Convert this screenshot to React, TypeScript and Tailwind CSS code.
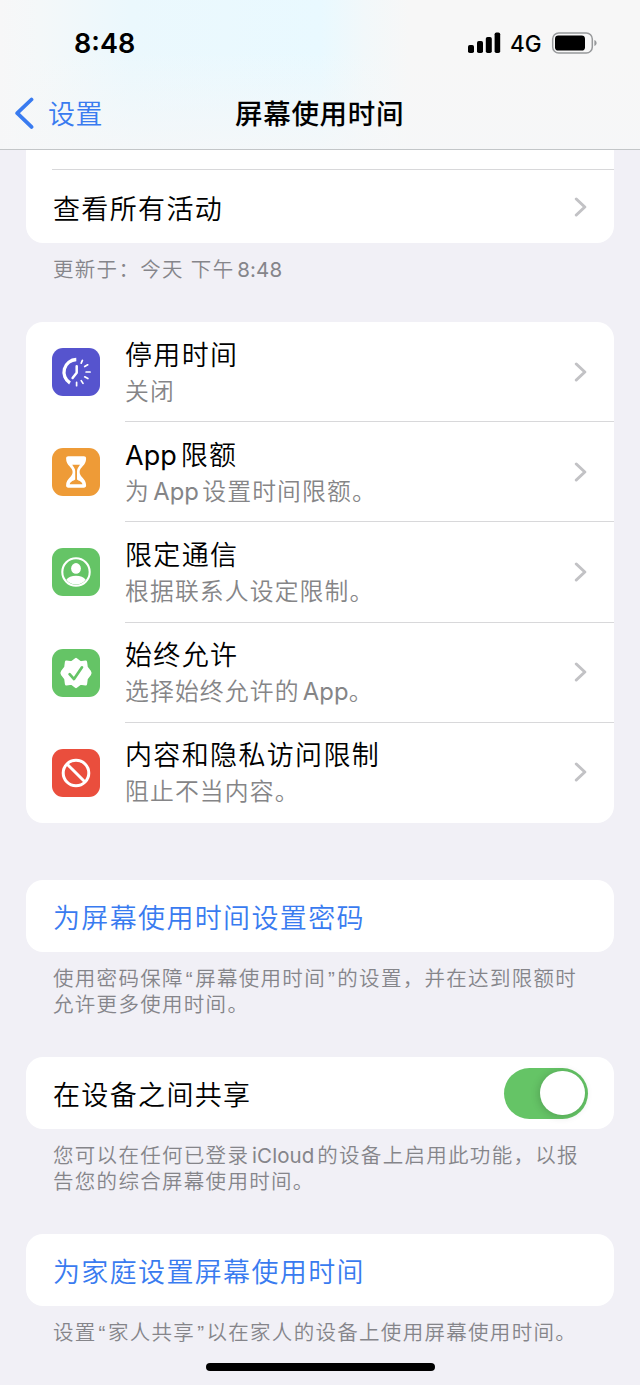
import React from 'react';

function Chevron() {
  return (
    <svg className="h-[20px] w-[13px] shrink-0" viewBox="0 0 13 20" fill="none" stroke="#c2c2c5" strokeWidth="3" strokeLinecap="round" strokeLinejoin="round">
      <path d="M2.3 2 10.8 10 2.3 18" />
    </svg>
  );
}

function DowntimeIcon() {
  return (
    <svg className="size-[48px]" viewBox="0 0 48 48" fill="none" stroke="#fff" strokeLinecap="round" strokeLinejoin="round">
      <path d="M24.3 11.5A12.7 12.7 0 0 0 18 35" strokeWidth="3.3" strokeLinecap="butt" />
      <path d="M24.7 18.2v6.6L20.6 30" strokeWidth="2.5" />
      <g strokeWidth="1.7">
        <path d="M29.2 15.2l1.2-2.8M32.7 18.6l3-1.8M34.1 24h4M32.7 28.8l3.2 1.8M29.2 32.6l1.8 2.8M24.6 34.3v3.4" />
      </g>
    </svg>
  );
}

function HourglassIcon() {
  return (
    <svg className="size-[48px]" viewBox="0 0 48 48" fill="#fff">
      <path d="M16.3 8.3h15.6c1.4 0 2.2.9 2.2 2.1 0 7.4-6.5 8.3-6.5 13.6s6.5 6.2 6.5 13.6c0 1.3-.8 2.2-2.2 2.2H16.3c-1.4 0-2.2-.9-2.2-2.2 0-7.4 6.5-8.3 6.5-13.6s-6.5-6.2-6.5-13.6c0-1.2.8-2.1 2.2-2.1Z" />
      <path d="M20.2 16.8h7.8c-1.6 2.3-3 4-3 6.4v8.2c1.6 1.2 5 2.2 5.5 4.8H17.7c.5-2.6 3.9-3.6 5.5-4.8v-8.2c0-2.4-1.4-4.1-3-6.4Z" fill="#ee9b37" />
    </svg>
  );
}

function PersonIcon() {
  return (
    <svg className="size-[48px]" viewBox="0 0 48 48" fill="#fff">
      <circle cx="24" cy="24" r="13.7" fill="none" stroke="#fff" strokeWidth="2.1" />
      <ellipse cx="24" cy="20.4" rx="4.9" ry="5.3" />
      <path d="M14.3 31.8c1.9-2.6 5.4-4.1 9.7-4.1s7.8 1.5 9.7 4.1A12.3 12.3 0 0 1 24 36.6a12.3 12.3 0 0 1-9.7-4.8Z" />
    </svg>
  );
}

function SealIcon() {
  return (
    <svg className="size-[48px]" viewBox="0 0 48 48" strokeLinejoin="round" strokeLinecap="round">
      <path d="M24 10.4l4.3 3.3 5.3-.7.7 5.3 3.3 4.3q1 1.4 0 2.8l-3.3 4.3-.7 5.3-5.3-.7-4.3 3.3-4.3-3.3-5.3.7-.7-5.3-3.3-4.3q-1-1.4 0-2.8l3.3-4.3.7-5.3 5.3.7Z" fill="#fff" stroke="#fff" strokeWidth="3" />
      <path d="M17.6 25.2l4.4 4.9 8-11.8" fill="none" stroke="#65c466" strokeWidth="2.7" />
    </svg>
  );
}

function NoEntryIcon() {
  return (
    <svg className="size-[48px]" viewBox="0 0 48 48" fill="none" stroke="#fff" strokeWidth="3">
      <circle cx="24" cy="24" r="12.8" />
      <path d="M15.2 15.2 32.8 32.8" />
    </svg>
  );
}

interface Item {
  title: string;
  detail: string;
  tile: string;
  icon: React.ReactNode;
}

const items: Item[] = [
  { title: '停用时间', detail: '关闭', tile: 'bg-[#5654ce]', icon: <DowntimeIcon /> },
  { title: 'App 限额', detail: '为 App 设置时间限额。', tile: 'bg-[#ee9b37]', icon: <HourglassIcon /> },
  { title: '限定通信', detail: '根据联系人设定限制。', tile: 'bg-[#65c466]', icon: <PersonIcon /> },
  { title: '始终允许', detail: '选择始终允许的 App。', tile: 'bg-[#65c466]', icon: <SealIcon /> },
  { title: '内容和隐私访问限制', detail: '阻止不当内容。', tile: 'bg-[#ea4e3d]', icon: <NoEntryIcon /> },
];

const titleText = 'text-[27px] leading-[36px] tracking-[1.35px] whitespace-nowrap';

/* Latin words and digits are set tighter than the Chinese text around them. */
function Mixed({ text }: { text: string }) {
  return (
    <>
      {text.split(/( ?(?:App|iCloud|8:48) ?|[“”])/).map((part, i) => {
        if (i % 2 === 0) return part;
        if (part === '“' || part === '”') {
          return <span key={i} className="mx-[2px] font-['Liberation_Sans',sans-serif] tracking-[0.5px]">{part}</span>;
        }
        return <span key={i} className="font-normal tracking-[0.1px] [word-spacing:-0.15em]">{part}</span>;
      })}
    </>
  );
}

function Row({ item, last }: { item: Item; last: boolean }) {
  return (
    <div className="flex h-[100.2px] pl-[26.4px]">
      <div className={`mt-[26px] size-[48px] shrink-0 overflow-hidden rounded-[11px] ${item.tile}`}>{item.icon}</div>
      <div className={`ml-[24.6px] flex flex-1 items-center border-b pr-[27px] ${last ? 'border-transparent' : 'border-[#d8d8da]'}`}>
        <div className="flex-1 pt-[3px]">
          <div className={titleText}><Mixed text={item.title} /></div>
          <div className="text-[23.8px] leading-[35px] tracking-[1.15px] whitespace-nowrap text-[#858587]"><Mixed text={item.detail} /></div>
        </div>
        <Chevron />
      </div>
    </div>
  );
}

function Note({ lines, className }: { lines: string[]; className: string }) {
  return (
    <div className={`pl-[53px] text-[20.5px] leading-[26px] tracking-[1.3px] text-[#85858a] ${className}`}>
      {lines.map((line) => (
        <div key={line} className="relative top-px whitespace-nowrap"><Mixed text={line} /></div>
      ))}
    </div>
  );
}

export default function App() {
  return (
    <div className="flex h-[1385px] w-[640px] flex-col overflow-hidden bg-[#f1f0f6] font-['Inter','Noto_Sans_CJK_SC',sans-serif] font-[350] text-black">
      <header className="flex h-[150px] shrink-0 flex-col border-b border-[#c3c6c8] bg-[linear-gradient(to_bottom,rgba(246,247,248,0)_35%,rgba(246,247,248,0.8)_100%),linear-gradient(to_right,#f7f7f8_0px,#f4f8f9_40px,#ebf8fd_130px,#e9f9ff_320px,#f2f8fa_365px,#f7f7f7_410px)]">
        <div className="flex h-[86px] items-center pl-[74px]">
          <span className="w-[394px] pt-px text-[27px] leading-[32px] font-semibold">8:48</span>
          <svg className="h-[22px] w-[33px]" viewBox="0 0 33 22">
            <rect x="0" y="13" width="6" height="8" rx="1.8" />
            <rect x="9" y="9" width="6" height="12" rx="1.8" />
            <rect x="17.8" y="5" width="6" height="16" rx="1.8" />
            <rect x="26.6" y="0.5" width="5.6" height="20.5" rx="1.8" />
          </svg>
          <span className="ml-[9px] w-[41px] pt-px text-[22.5px] leading-[32px] font-medium">4G</span>
          <svg className="h-[22px] w-[46px]" viewBox="0 0 46 22">
            <rect x="1.7" y="1" width="39.6" height="20" rx="6" fill="none" stroke="#97999b" strokeWidth="1.5" />
            <rect x="4" y="3.6" width="30" height="15" rx="3.4" />
            <path d="M43.4 8v6c1.4-.6 2.2-1.6 2.2-3s-.8-2.4-2.2-3Z" fill="#97999b" />
          </svg>
        </div>
        <div className="flex h-[56px] items-center pl-[14px]">
          <svg className="h-[34px] w-[21px]" viewBox="0 0 21 34" fill="none" stroke="#397bf0" strokeWidth="3.8" strokeLinecap="round" strokeLinejoin="round">
            <path d="M17.5 2.5 3.2 16.2l14.3 13.7" />
          </svg>
          <span className="ml-[13px] w-[187px] pt-[2px] text-[27px] leading-[36px] tracking-[0.6px] text-[#397bf0]">设置</span>
          <h1 className="text-[27.5px] leading-[36px] font-medium tracking-[0.7px] whitespace-nowrap">屏幕使用时间</h1>
        </div>
      </header>

      <main className="flex flex-col px-[26px]">
        <section className="h-[93px] rounded-b-[17px] bg-white pt-[19px] pl-[26px]">
          <div className="flex h-[74px] items-center justify-between border-t border-[#d8d8da] pr-[27px] pl-px">
            <span className={`pt-[6px] ${titleText}`}>查看所有活动</span>
            <Chevron />
          </div>
        </section>
      </main>
      <Note className="mt-[13px]" lines={['更新于：今天 下午 8:48']} />

      <section className="mx-[26px] mt-[40px] h-[501px] shrink-0 rounded-[17px] bg-white">
        {items.map((item, i) => (
          <Row key={item.title} item={item} last={i === items.length - 1} />
        ))}
      </section>

      <section className="mx-[26px] mt-[57px] flex h-[72px] shrink-0 items-center rounded-[17px] bg-white pl-[27px] text-[#397bf0]">
        <span className={`pt-[6px] ${titleText}`}>为屏幕使用时间设置密码</span>
      </section>
      <Note className="mt-[13px]" lines={['使用密码保障“屏幕使用时间”的设置，并在达到限额时', '允许更多使用时间。']} />

      <section className="mx-[26px] mt-[40px] flex h-[72px] shrink-0 items-center justify-between rounded-[17px] bg-white pr-[26px] pl-[27px]">
        <span className={`pt-[6px] ${titleText}`}>在设备之间共享</span>
        <button type="button" role="switch" aria-checked="true" aria-label="在设备之间共享" className="flex h-[51px] w-[84px] items-center justify-end rounded-full bg-[#65c466] pr-[3.5px]">
          <span className="size-[44.5px] rounded-full bg-white shadow-[-1px_1px_9px_rgba(0,0,0,0.18)]" />
        </button>
      </section>
      <Note className="mt-[13px]" lines={['您可以在任何已登录 iCloud 的设备上启用此功能，以报', '告您的综合屏幕使用时间。']} />

      <section className="mx-[26px] mt-[40px] flex h-[72px] shrink-0 items-center rounded-[17px] bg-white pl-[27px] text-[#397bf0]">
        <span className={`pt-[6px] ${titleText}`}>为家庭设置屏幕使用时间</span>
      </section>
      <Note className="mt-[13px]" lines={['设置“家人共享”以在家人的设备上使用屏幕使用时间。']} />
      <div className="mt-[18px] ml-[206px] h-[8px] w-[229px] shrink-0 rounded-full bg-black" />
    </div>
  );
}
